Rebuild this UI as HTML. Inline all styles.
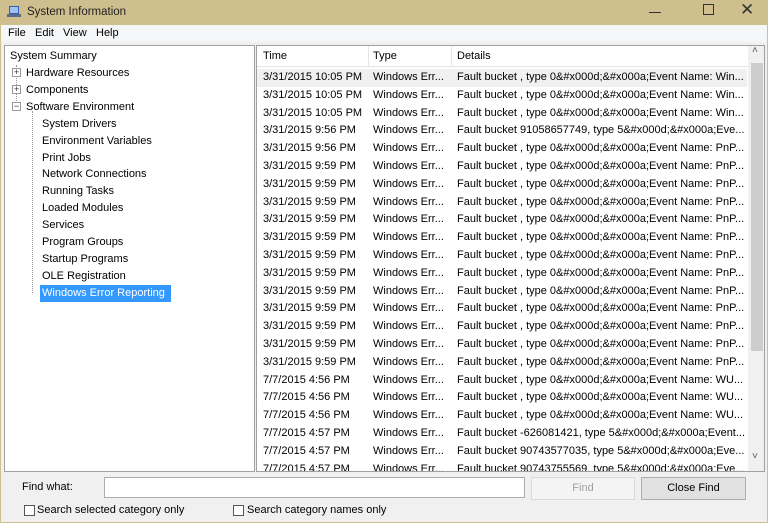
<!DOCTYPE html>
<html><head><style>
*{margin:0;padding:0;box-sizing:border-box}
body{width:768px;height:523px;background:#cfbf8f;font-family:"Liberation Sans",sans-serif;font-size:11px;color:#000;position:relative;overflow:hidden}
.a{position:absolute;white-space:nowrap}
#title{left:0;top:0;width:768px;height:25px;background:#cfbf8f}
#client{left:1px;top:25px;width:766px;height:497px;background:#f0f0f0}
#menu{left:1px;top:25px;width:766px;height:17px;background:#f5f6f7}
.pane{background:#fff;border:1px solid #a0a0a0}
.tr{position:absolute;left:0;white-space:nowrap;height:16.9px;line-height:16.9px}
.row{position:absolute;left:0;width:490px;height:17.73px;line-height:17.73px;white-space:nowrap}
.row span{position:absolute}
.dot{position:absolute;border-left:1px dotted #999}
.pm{position:absolute;width:9px;height:9px;border:1px solid #999;background:#fff;font-size:9px;line-height:7px;text-align:center;color:#333}
.cb{position:absolute;width:11px;height:11px;border:1px solid #555;background:#fff}
</style></head><body>
<div class="a" id="title"></div>
<svg class="a" style="left:7px;top:5px" width="16" height="14"><rect x="2" y="1" width="10" height="8" fill="#3a5bb8"/><rect x="3" y="2" width="8" height="6" fill="#9cc3f0"/><rect x="0" y="9" width="14" height="3" fill="#5a6a8a"/></svg>
<div class="a" style="left:27px;top:6px;font-size:11.5px;color:#222">System Information</div>
<div class="a" style="left:649px;top:12px;width:12px;height:1px;background:#333"></div>
<div class="a" style="left:703px;top:4px;width:11px;height:11px;border:1px solid #333"></div>
<div class="a" style="left:740px;top:0px;font-size:17px;color:#333">✕</div>
<div class="a" id="client"></div>
<div class="a" id="menu"></div>
<div class="a" style="left:8px;top:27px">File</div>
<div class="a" style="left:35px;top:27px">Edit</div>
<div class="a" style="left:63px;top:27px">View</div>
<div class="a" style="left:96px;top:27px">Help</div>

<div class="a pane" style="left:4px;top:45px;width:251px;height:427px">
  <div class="tr" style="left:5px;top:2px">System Summary</div>
  <div class="dot" style="left:11px;top:19px;height:36px"></div>
  <div class="pm" style="left:7px;top:22px">+</div><div class="tr" style="left:21px;top:19px">Hardware Resources</div>
  <div class="pm" style="left:7px;top:39px">+</div><div class="tr" style="left:21px;top:36px">Components</div>
  <div class="pm" style="left:7px;top:56px">−</div><div class="tr" style="left:21px;top:53px">Software Environment</div>
  <div class="dot" style="left:27px;top:65px;height:182px"></div>
  <div class="tr" style="left:37px;top:70px">System Drivers</div>
  <div class="tr" style="left:37px;top:87px">Environment Variables</div>
  <div class="tr" style="left:37px;top:104px">Print Jobs</div>
  <div class="tr" style="left:37px;top:120px">Network Connections</div>
  <div class="tr" style="left:37px;top:137px">Running Tasks</div>
  <div class="tr" style="left:37px;top:154px">Loaded Modules</div>
  <div class="tr" style="left:37px;top:171px">Services</div>
  <div class="tr" style="left:37px;top:188px">Program Groups</div>
  <div class="tr" style="left:37px;top:205px">Startup Programs</div>
  <div class="tr" style="left:37px;top:222px">OLE Registration</div>
  <div class="tr" style="left:35px;top:239px;background:#3399ff;color:#fff;padding:0 2px;width:131px">Windows Error Reporting</div>
</div>

<div class="a pane" style="left:256px;top:45px;width:509px;height:427px;overflow:hidden">
  <div class="a" style="left:0;top:0;width:491px;height:21px;background:#fff;border-bottom:1px solid #e5e5e5"></div>
  <div class="a" style="left:6px;top:4px">Time</div>
  <div class="a" style="left:111px;top:0;width:1px;height:21px;background:#e5e5e5"></div>
  <div class="a" style="left:116px;top:4px">Type</div>
  <div class="a" style="left:194px;top:0;width:1px;height:21px;background:#e5e5e5"></div>
  <div class="a" style="left:200px;top:4px">Details</div>
  <div class="a" style="left:0;top:21px;width:491px;height:405px;overflow:hidden" id="rows"></div>
  <div class="a" style="left:491px;top:0;width:17px;height:427px;background:#f0f0f0"></div>
  <div class="a" style="left:495px;top:-1px;font-size:10px;color:#555">˄</div>
  <div class="a" style="left:494px;top:17px;width:12px;height:288px;background:#cdcdcd"></div>
  <div class="a" style="left:495px;top:405px;font-size:10px;color:#555">˅</div>
</div>

<div class="a" style="left:22px;top:481px">Find what:</div>
<div class="a" style="left:104px;top:477px;width:421px;height:21px;background:#fff;border:1px solid #abadb3"></div>
<div class="a" style="left:531px;top:477px;width:104px;height:23px;background:#f4f4f4;border:1px solid #dadada;color:#a0a0a0;text-align:center;line-height:21px">Find</div>
<div class="a" style="left:641px;top:477px;width:105px;height:23px;background:#e1e1e1;border:1px solid #adadad;text-align:center;line-height:21px">Close Find</div>
<div class="cb" style="left:24px;top:505px"></div>
<div class="a" style="left:37px;top:504px">Search selected category only</div>
<div class="cb" style="left:233px;top:505px"></div>
<div class="a" style="left:247px;top:504px">Search category names only</div>

<script>
var d=[["3/31/2015 10:05 PM","Fault bucket , type 0&amp;#x000d;&amp;#x000a;Event Name: Win..."],
["3/31/2015 10:05 PM","Fault bucket , type 0&amp;#x000d;&amp;#x000a;Event Name: Win..."],
["3/31/2015 10:05 PM","Fault bucket , type 0&amp;#x000d;&amp;#x000a;Event Name: Win..."],
["3/31/2015 9:56 PM","Fault bucket 91058657749, type 5&amp;#x000d;&amp;#x000a;Eve..."],
["3/31/2015 9:56 PM","Fault bucket , type 0&amp;#x000d;&amp;#x000a;Event Name: PnP..."]];
for(var i=0;i<12;i++)d.push(["3/31/2015 9:59 PM","Fault bucket , type 0&amp;#x000d;&amp;#x000a;Event Name: PnP..."]);
for(var i=0;i<3;i++)d.push(["7/7/2015 4:56 PM","Fault bucket , type 0&amp;#x000d;&amp;#x000a;Event Name: WU..."]);
d.push(["7/7/2015 4:57 PM","Fault bucket -626081421, type 5&amp;#x000d;&amp;#x000a;Event..."]);
d.push(["7/7/2015 4:57 PM","Fault bucket 90743577035, type 5&amp;#x000d;&amp;#x000a;Eve..."]);
d.push(["7/7/2015 4:57 PM","Fault bucket 90743755569, type 5&amp;#x000d;&amp;#x000a;Eve..."]);
var h="";
for(var i=0;i<d.length;i++){h+='<div class="row" style="top:'+(i*17.8+2)+'px;'+(i==0?'background:#f0f0f0':'')+'"><span style="left:6px">'+d[i][0]+'</span><span style="left:116px">Windows Err...</span><span style="left:200px">'+d[i][1]+'</span></div>';}
document.getElementById("rows").innerHTML=h;
</script>
</body></html>
